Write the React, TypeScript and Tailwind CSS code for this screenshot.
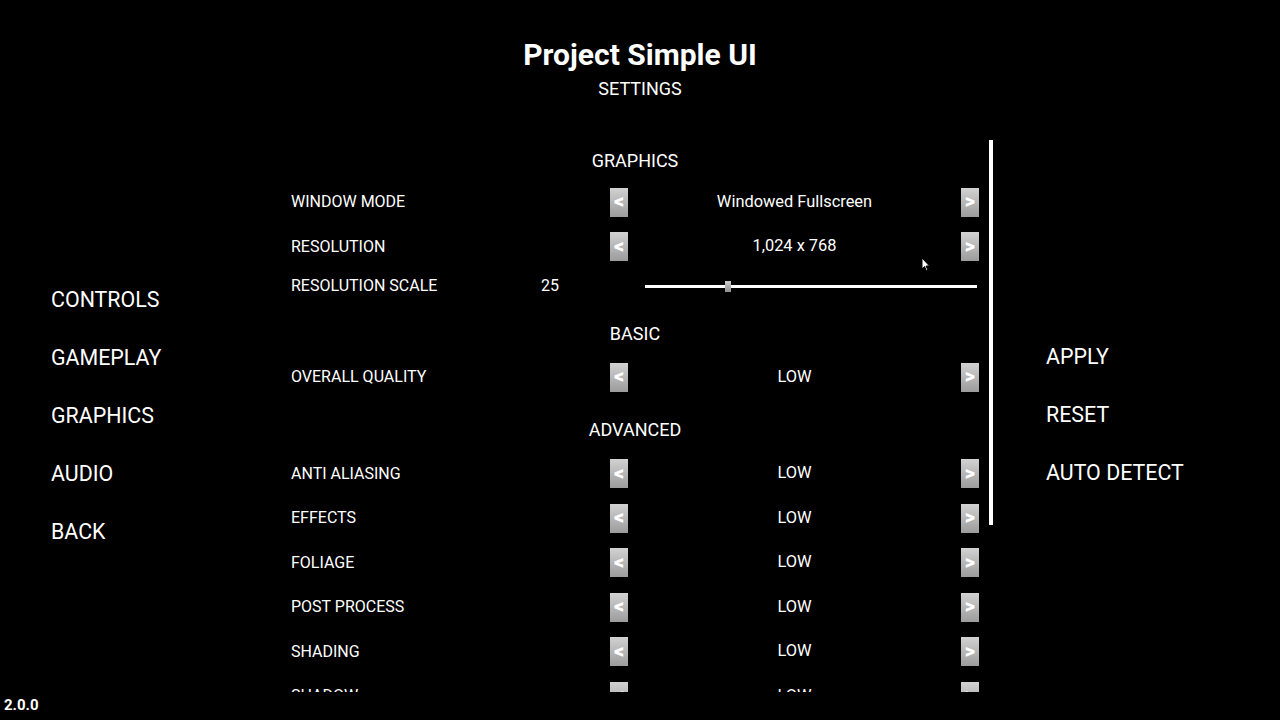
import React from "react";

type Row =
  | { kind: "header"; title: string; cls: string }
  | { kind: "option"; label: string; value: string }
  | { kind: "slider"; label: string; value: number };

const rows: Row[] = [
  { kind: "header", title: "GRAPHICS", cls: "h-[40px]" },
  { kind: "option", label: "WINDOW MODE", value: "Windowed Fullscreen" },
  { kind: "option", label: "RESOLUTION", value: "1,024 x 768" },
  { kind: "slider", label: "RESOLUTION SCALE", value: 25 },
  { kind: "header", title: "BASIC", cls: "mt-[8px] h-[44px]" },
  { kind: "option", label: "OVERALL QUALITY", value: "LOW" },
  { kind: "header", title: "ADVANCED", cls: "mt-[8px] h-[44px]" },
  { kind: "option", label: "ANTI ALIASING", value: "LOW" },
  { kind: "option", label: "EFFECTS", value: "LOW" },
  { kind: "option", label: "FOLIAGE", value: "LOW" },
  { kind: "option", label: "POST PROCESS", value: "LOW" },
  { kind: "option", label: "SHADING", value: "LOW" },
  { kind: "option", label: "SHADOW", value: "LOW" },
];

function ArrowButton({ dir }: { dir: "<" | ">" }) {
  return (
    <div className="w-[18px] h-[29px] shrink-0 bg-gradient-to-b from-[#d2d2d2] to-[#9c9c9c] flex items-center justify-center text-white font-black text-[20px] leading-none pb-[2px]">
      {dir}
    </div>
  );
}

export default function App() {
  return (
    <div className="relative w-[1280px] h-[720px] overflow-hidden bg-black text-white font-['Roboto',sans-serif] flex flex-col">
      {/* title */}
      <div className="mt-[36px] text-center text-[30px] leading-[38px] font-bold">
        Project Simple UI
      </div>
      <div className="mt-[3px] text-center text-[18px] leading-[24px]">
        SETTINGS
      </div>

      <div className="mt-[39px] flex">
        {/* left menu */}
        <div className="w-[280px] pl-[51px] pt-[131px] flex flex-col">
          {["CONTROLS", "GAMEPLAY", "GRAPHICS", "AUDIO", "BACK"].map((m) => (
            <div key={m} className="text-[21.4px] leading-[58px]">
              {m}
            </div>
          ))}
        </div>

        {/* settings list */}
        <div className="flex">
          <div className="w-[699px] pl-[11px] h-[552px] overflow-hidden flex flex-col">
            {rows.map((r, i) => {
              if (r.kind === "header") {
                return (
                  <div
                    key={i}
                    className={`${r.cls} shrink-0 flex items-center justify-center text-[18px]`}
                  >
                    {r.title}
                  </div>
                );
              }
              if (r.kind === "slider") {
                return (
                  <div key={i} className="h-[34px] shrink-0 flex items-center text-[16px]">
                    <div className="w-[250px]">{r.label}</div>
                    <div className="w-[104px]">{r.value}</div>
                    <div className="relative w-[332px] h-[3px] bg-white">
                      <div
                        className="absolute top-[-4px] w-[6px] h-[11px] bg-gradient-to-b from-[#d0d0d0] to-[#8e8e8e]"
                        style={{ left: `${(r.value / 100) * 332 - 3}px` }}
                      />
                    </div>
                  </div>
                );
              }
              return (
                <div key={i} className="h-[44.5px] shrink-0 flex items-center text-[16px]">
                  <div className="w-[319px]">{r.label}</div>
                  <ArrowButton dir="<" />
                  <div className="w-[333px] text-center text-[16.4px]">{r.value}</div>
                  <ArrowButton dir=">" />
                </div>
              );
            })}
          </div>
          <div className="ml-[10px] w-[4px] h-[385px] bg-white" />
        </div>

        {/* right menu */}
        <div className="pl-[53px] pt-[188px] flex flex-col">
          {["APPLY", "RESET", "AUTO DETECT"].map((m) => (
            <div key={m} className="text-[21.4px] leading-[58px]">
              {m}
            </div>
          ))}
        </div>
      </div>

      {/* version */}
      <div className="absolute left-[4px] bottom-[6px] text-[15px] leading-[18px] font-bold">
        2.0.0
      </div>

      {/* mouse cursor */}
      <svg className="absolute left-[921px] top-[257px]" width="10" height="15" viewBox="0 0 10 15">
        <path d="M1 1 L1 12 L3.5 9.5 L5.5 14 L7 13.3 L5 9 L8.5 9 Z" fill="white" stroke="black" strokeWidth="1" />
      </svg>
    </div>
  );
}
